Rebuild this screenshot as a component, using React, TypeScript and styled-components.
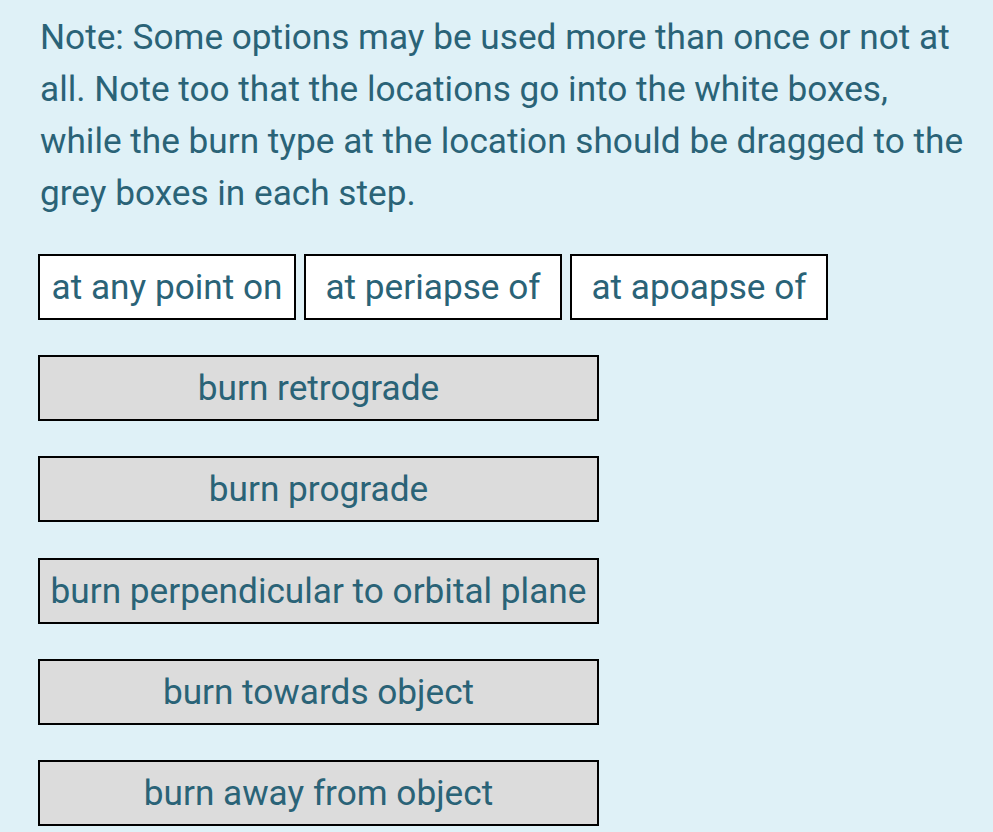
import React from 'react';
import styled, { createGlobalStyle } from 'styled-components';

const GlobalStyle = createGlobalStyle`
    html, body {
        margin: 0;
        padding: 0;
        background-color: #dff1f7;
    }
`

const Page = styled.div`
    min-height: 832px;
    background-color: #dff1f7;
    color: #2a6377;
    font-family: Roboto, "Liberation Sans", sans-serif;
    font-size: 35.2px;
    padding: 11px 18px 0 38px;
    box-sizing: border-box;
`

const Note = styled.p`
    margin: 0 0 35px 2px;
    line-height: 52px;
`

const LocationRow = styled.div`
    display: flex;
    gap: 8px;
    margin-bottom: 35px;
`

const Tile = styled.div<{ $grey?: boolean }>`
    box-sizing: border-box;
    height: 66px;
    border: 2px solid #000000;
    display: flex;
    align-items: center;
    justify-content: center;
    white-space: nowrap;
    background-color: ${p => (p.$grey ? '#dcdcdc' : '#ffffff')};
    width: ${p => (p.$grey ? '561px' : '258px')};
`

const BurnList = styled.div`
    display: flex;
    flex-direction: column;
    gap: 35.3px;
`

const locations = ['at any point on', 'at periapse of', 'at apoapse of'];
const burns = [
    'burn retrograde',
    'burn prograde',
    'burn perpendicular to orbital plane',
    'burn towards object',
    'burn away from object',
];

const App: React.FunctionComponent = () => {
    return (
        <Page>
            <GlobalStyle />
            <Note>
                Note: Some options may be used more than once or not at all. Note too that the
                locations go into the white boxes, while the burn type at the location should be
                dragged to the grey boxes in each step.
            </Note>
            <LocationRow>
                {locations.map(l => <Tile key={l}>{l}</Tile>)}
            </LocationRow>
            <BurnList>
                {burns.map(b => <Tile $grey key={b}>{b}</Tile>)}
            </BurnList>
        </Page>
    )
}

export default App;
